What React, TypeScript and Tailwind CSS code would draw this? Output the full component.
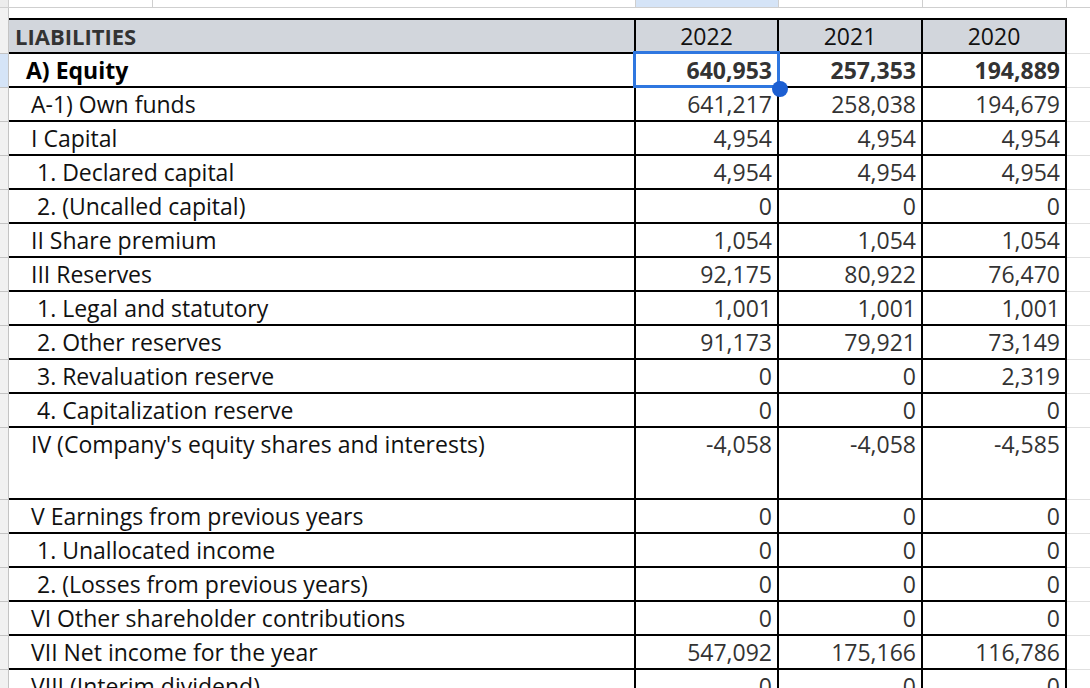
import React from "react";

type Row = {
  label: string;
  values: [string, string, string];
  indent: "top" | "one" | "two";
  bold?: boolean;
  tall?: boolean;
};

const rows: Row[] = [
  { label: "A) Equity", values: ["640,953", "257,353", "194,889"], indent: "top", bold: true },
  { label: "A-1) Own funds", values: ["641,217", "258,038", "194,679"], indent: "one" },
  { label: "I Capital", values: ["4,954", "4,954", "4,954"], indent: "one" },
  { label: "1. Declared capital", values: ["4,954", "4,954", "4,954"], indent: "two" },
  { label: "2. (Uncalled capital)", values: ["0", "0", "0"], indent: "two" },
  { label: "II Share premium", values: ["1,054", "1,054", "1,054"], indent: "one" },
  { label: "III Reserves", values: ["92,175", "80,922", "76,470"], indent: "one" },
  { label: "1. Legal and statutory", values: ["1,001", "1,001", "1,001"], indent: "two" },
  { label: "2. Other reserves", values: ["91,173", "79,921", "73,149"], indent: "two" },
  { label: "3. Revaluation reserve", values: ["0", "0", "2,319"], indent: "two" },
  { label: "4. Capitalization reserve", values: ["0", "0", "0"], indent: "two" },
  { label: "IV (Company's equity shares and interests)", values: ["-4,058", "-4,058", "-4,585"], indent: "one", tall: true },
  { label: "V Earnings from previous years", values: ["0", "0", "0"], indent: "one" },
  { label: "1. Unallocated income", values: ["0", "0", "0"], indent: "two" },
  { label: "2. (Losses from previous years)", values: ["0", "0", "0"], indent: "two" },
  { label: "VI Other shareholder contributions", values: ["0", "0", "0"], indent: "one" },
  { label: "VII Net income for the year", values: ["547,092", "175,166", "116,786"], indent: "one" },
  { label: "VIII (Interim dividend)", values: ["0", "0", "0"], indent: "one" },
];

const indentClass = {
  top: "pl-[17px]",
  one: "pl-[22px]",
  two: "pl-[28px]",
};

function DataRow({ row, selected }: { row: Row; selected?: boolean }) {
  const h = row.tall ? "h-[72px]" : "h-[34px]";
  return (
    <div className={`flex ${h}`}>
      <div
        className={`w-[9px] shrink-0 border-r border-b border-[#c4c4c4] ${
          selected ? "bg-[#d5e4f7]" : "bg-[#f1f1f1]"
        }`}
      />
      <div
        className={`w-[627px] shrink-0 border-r-2 border-b-2 border-black leading-[32px] whitespace-nowrap ${indentClass[row.indent]} ${
          row.bold ? "font-bold text-black" : "text-[#111]"
        }`}
      >
        {row.label}
      </div>
      {row.values.map((v, i) => (
        <div
          key={i}
          className={`${i === 0 ? "w-[143px]" : "w-[144px]"} shrink-0 border-r-2 border-b-2 border-black pr-[5px] text-right leading-[32px] text-[#333] ${
            row.bold ? "font-bold" : ""
          }`}
        >
          {v}
        </div>
      ))}
      <div className="flex-1 border-b border-[#e0e0e0]" />
    </div>
  );
}

export default function App() {
  return (
    <div
      className="relative w-[1090px] h-[688px] overflow-hidden bg-white text-[23px]"
      style={{ fontFamily: "'Open Sans', Lato, sans-serif" }}
    >
      {/* column header strip */}
      <div className="flex h-[8px] border-b border-[#cfcfcf]">
        <div className="w-[9px] shrink-0 border-r border-[#cfcfcf] bg-[#ececec]" />
        <div className="w-[144px] shrink-0 border-r border-[#cfcfcf]" />
        <div className="w-[483px] shrink-0 border-r border-[#cfcfcf]" />
        <div className="w-[143px] shrink-0 border-r border-[#cfcfcf] bg-[#d5e4f7]" />
        <div className="w-[144px] shrink-0 border-r border-[#cfcfcf]" />
        <div className="w-[144px] shrink-0 border-r border-[#cfcfcf]" />
        <div className="flex-1" />
      </div>

      {/* empty row above table */}
      <div className="flex h-[10px]">
        <div className="w-[9px] shrink-0 border-r border-[#c4c4c4] bg-[#f1f1f1]" />
        <div className="flex-1" />
      </div>

      {/* header row */}
      <div className="flex h-[36px]">
        <div className="w-[9px] shrink-0 border-r border-b border-[#c4c4c4] bg-[#f1f1f1]" />
        <div className="w-[627px] shrink-0 border-t-2 border-r-2 border-b-2 border-black bg-[#d2d6dc] pl-[6px] text-[22px] font-bold leading-[32px] text-[#333]">
          LIABILITIES
        </div>
        {["2022", "2021", "2020"].map((y, i) => (
          <div
            key={y}
            className={`${i === 0 ? "w-[143px]" : "w-[144px]"} shrink-0 border-t-2 border-r-2 border-b-2 border-black bg-[#d2d6dc] text-center leading-[32px] text-[#111]`}
          >
            {y}
          </div>
        ))}
        <div className="flex-1 border-b border-[#e0e0e0]" />
      </div>

      {rows.map((r, i) => (
        <DataRow key={r.label} row={r} selected={i === 0} />
      ))}

      {/* active cell selection */}
      <div className="absolute left-[633px] top-[51px] w-[147px] h-[37px] border-[3px] border-[#2f77e0]" />
      <div className="absolute left-[772px] top-[81px] w-[16px] h-[16px] rounded-full bg-[#1c5fd2]" />
    </div>
  );
}
